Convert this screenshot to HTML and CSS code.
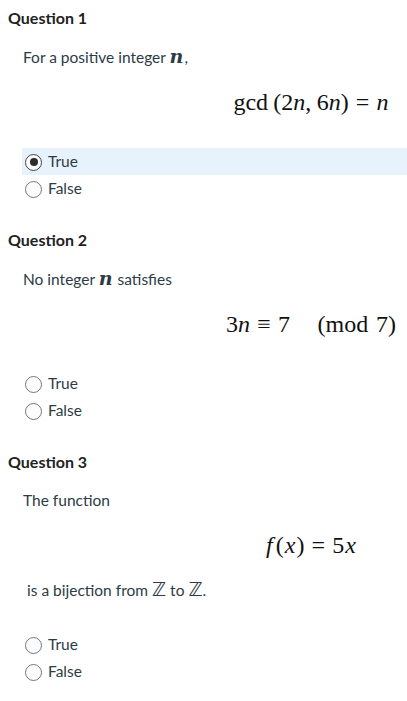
FILE: index.html
```html
<!DOCTYPE html>
<html lang="en">
<head>
    <meta charset="UTF-8">
    <meta name="viewport" content="width=device-width, initial-scale=1.0">
    <title>Quiz</title>
    <link rel="stylesheet" href="styles.css">
</head>
<body>
    <main class="quiz">
        <section class="question">
            <h2 class="question-title">Question 1</h2>
            <div class="question-body">
                <p class="prompt">For a positive integer <span class="math-inline">n</span>,</p>
                <div class="math-display">
                    <span class="mo">gcd</span><span class="thin"></span><span class="mo">(2</span><span class="mi">n</span><span class="mo">,</span><span class="thin"></span><span class="mo">6</span><span class="mi">n</span><span class="mo">)</span><span class="rel">=</span><span class="mi">n</span>
                </div>
            </div>
            <div class="answers">
                <label class="answer selected"><input type="radio" name="q1" checked><span>True</span></label>
                <label class="answer"><input type="radio" name="q1"><span>False</span></label>
            </div>
        </section>

        <section class="question">
            <h2 class="question-title">Question 2</h2>
            <div class="question-body">
                <p class="prompt">No integer <span class="math-inline">n</span> satisfies</p>
                <div class="math-display">
                    <span class="mo">3</span><span class="mi">n</span><span class="rel">&#8801;</span><span class="mo">7</span><span class="quad"></span><span class="mo">(mod</span><span class="med"></span><span class="mo">7)</span>
                </div>
            </div>
            <div class="answers">
                <label class="answer"><input type="radio" name="q2"><span>True</span></label>
                <label class="answer"><input type="radio" name="q2"><span>False</span></label>
            </div>
        </section>

        <section class="question">
            <h2 class="question-title">Question 3</h2>
            <div class="question-body">
                <p class="prompt">The function</p>
                <div class="math-display">
                    <span class="mi f">f</span><span class="mo">(</span><span class="mi x">x</span><span class="mo">)</span><span class="rel">=</span><span class="mo">5</span><span class="mi x">x</span>
                </div>
                <p class="prompt after">is a bijection from <span class="set">&#8484;</span> to <span class="set">&#8484;</span>.</p>
            </div>
            <div class="answers">
                <label class="answer"><input type="radio" name="q3"><span>True</span></label>
                <label class="answer"><input type="radio" name="q3"><span>False</span></label>
            </div>
        </section>
    </main>
</body>
</html>
```

FILE: styles.css
```css
body {
    margin: 0;
    font-family: Lato, 'Noto Sans', sans-serif;
    color: #2d3b45;
    background: #fff;
}

.quiz {
    padding-top: 8px;
}

.question {
    margin-bottom: 28px;
}

.question-title {
    margin: 0;
    padding-left: 8px;
    font-size: 16px;
    font-weight: 700;
    line-height: 20px;
    color: #222;
}

.question-body {
    padding-left: 23px;
}

.prompt {
    margin: 18px 0 0;
    font-size: 15.5px;
    line-height: 20px;
}

.prompt.after {
    margin-top: 19px;
    padding-left: 4px;
}

.math-inline {
    font-family: 'DejaVu Serif', serif;
    font-style: italic;
    font-weight: 700;
    font-size: 19px;
    line-height: 20px;
    letter-spacing: 1px;
}

.set {
    font-family: 'DejaVu Sans', sans-serif;
    font-size: 19px;
    line-height: 20px;
}

.math-display {
    margin-top: 20px;
    padding-left: 192px;
    height: 30px;
    line-height: 30px;
    text-align: center;
    font-family: 'Liberation Serif', 'DejaVu Serif', serif;
    font-size: 24px;
    white-space: nowrap;
    color: #111;
}

.mi {
    font-style: italic;
}

.mi.f {
    padding: 0 3px 0 1px;
}

.mi.x {
    padding: 0 1px;
}

.rel {
    padding: 0 0.3em;
}

.thin {
    display: inline-block;
    width: 0.22em;
}

.med {
    display: inline-block;
    width: 0.33em;
}

.quad {
    display: inline-block;
    width: 1.15em;
}

.answers {
    margin: 31px 0 0 22px;
}

.answer {
    display: flex;
    align-items: center;
    height: 27px;
    padding-left: 3px;
    font-size: 15.5px;
    cursor: pointer;
}

.answer.selected {
    background-color: #e8f2fc;
}

.answer input {
    appearance: none;
    -webkit-appearance: none;
    box-sizing: border-box;
    width: 17px;
    height: 17px;
    margin: 1px 6px 0 0;
    border: 1px solid #73777a;
    border-radius: 50%;
    background: #fbfcfe;
    display: flex;
    align-items: center;
    justify-content: center;
}

.answer input:checked {
    border-color: #444;
}

.answer input:checked::after {
    content: "";
    width: 8px;
    height: 8px;
    border-radius: 50%;
    background: #2d2d2d;
}

.answer span {
    margin-top: -2px;
}
```
